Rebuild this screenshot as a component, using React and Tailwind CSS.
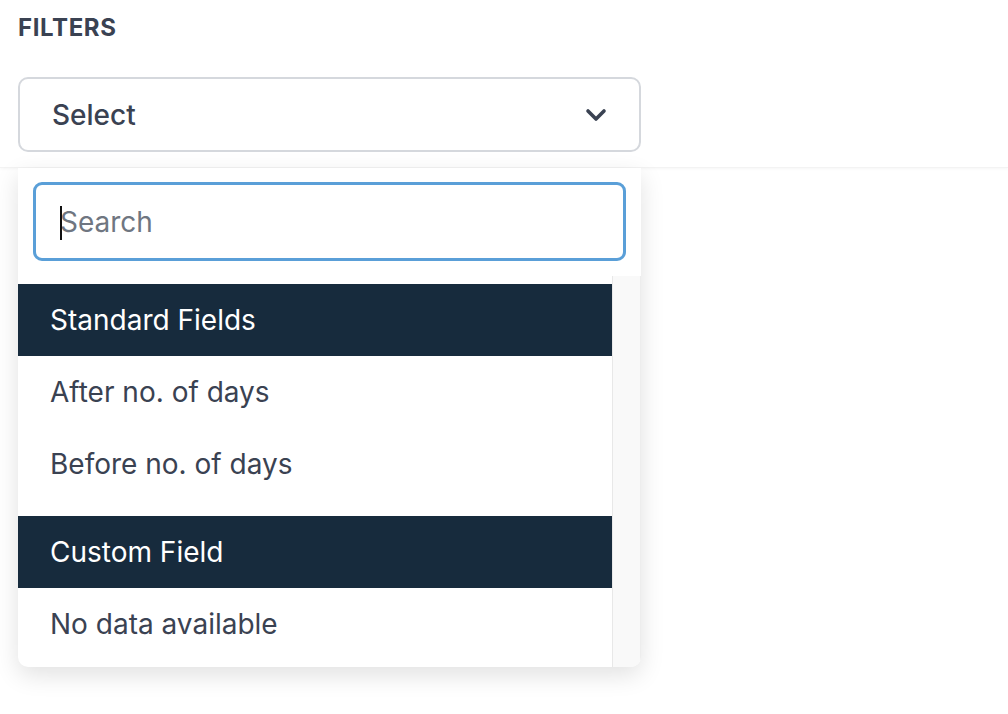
import React from 'react';

const groups = [
  { title: 'Standard Fields', items: ['After no. of days', 'Before no. of days'] },
  { title: 'Custom Field', items: ['No data available'] },
];

const App = () => {
  return (
    <div className="relative w-[1008px] h-[714px] bg-white overflow-hidden font-['Inter','Noto_Sans',sans-serif]">
      {/* Filters header */}
      <div className="h-[168px] bg-white shadow-[0_1px_3px_rgba(0,0,0,0.04)] border-b border-[#f3f3f3]">
        <div className="pl-[18px] pt-[13px]">
          <h2 className="text-[24px] leading-[30px] font-bold text-[#3a4252] tracking-[0.6px]">FILTERS</h2>
          <button className="mt-[34px] w-[623px] h-[75px] flex items-center justify-between pl-[32px] pr-[32px] border-2 border-[#d5d8dd] rounded-[10px] bg-white">
            <span className="text-[28px] font-medium text-[#3a4252]">Select</span>
            <svg width="22" height="14" viewBox="0 0 22 14" fill="none">
              <polyline points="3,3 11,11 19,3" stroke="#3a4252" strokeWidth="3.6" strokeLinecap="round" strokeLinejoin="round" />
            </svg>
          </button>
        </div>
      </div>

      {/* Dropdown menu */}
      <div className="absolute left-[18px] top-[168px] w-[623px] h-[499px] bg-white rounded-b-[10px] shadow-[0_8px_24px_rgba(0,0,0,0.12)] flex flex-col overflow-hidden">
        <div className="px-[15px] pt-[14px] pb-[15px]">
          <div className="relative h-[79px] border-[3px] border-[#5a9fd8] rounded-[9px] flex items-center pl-[24px]">
            <span className="absolute left-[24px] top-[21px] w-[2px] h-[34px] bg-[#111]" />
            <input
              className="w-full text-[28px] text-[#3a4252] placeholder:text-[#6f7681] outline-none bg-transparent"
              placeholder="Search"
            />
          </div>
        </div>
        <div className="flex flex-1 min-h-0">
          <div className="flex-1 py-[8px]">
            {groups.map((group, gi) => (
              <div key={group.title} className={gi > 0 ? 'mt-[16px]' : ''}>
                <div className="h-[72px] bg-[#172b3d] flex items-center pl-[32px] text-[28px] text-white">
                  {group.title}
                </div>
                {group.items.map((item) => (
                  <div key={item} className="h-[72px] flex items-center pl-[32px] text-[28px] text-[#3a4252]">
                    {item}
                  </div>
                ))}
              </div>
            ))}
          </div>
          {/* scrollbar track */}
          <div className="w-[29px] bg-[#f9f9f9] border-l border-[#e8e8e8] border-r border-r-[#ededed]" />
        </div>
      </div>
    </div>
  );
};

export default App;
